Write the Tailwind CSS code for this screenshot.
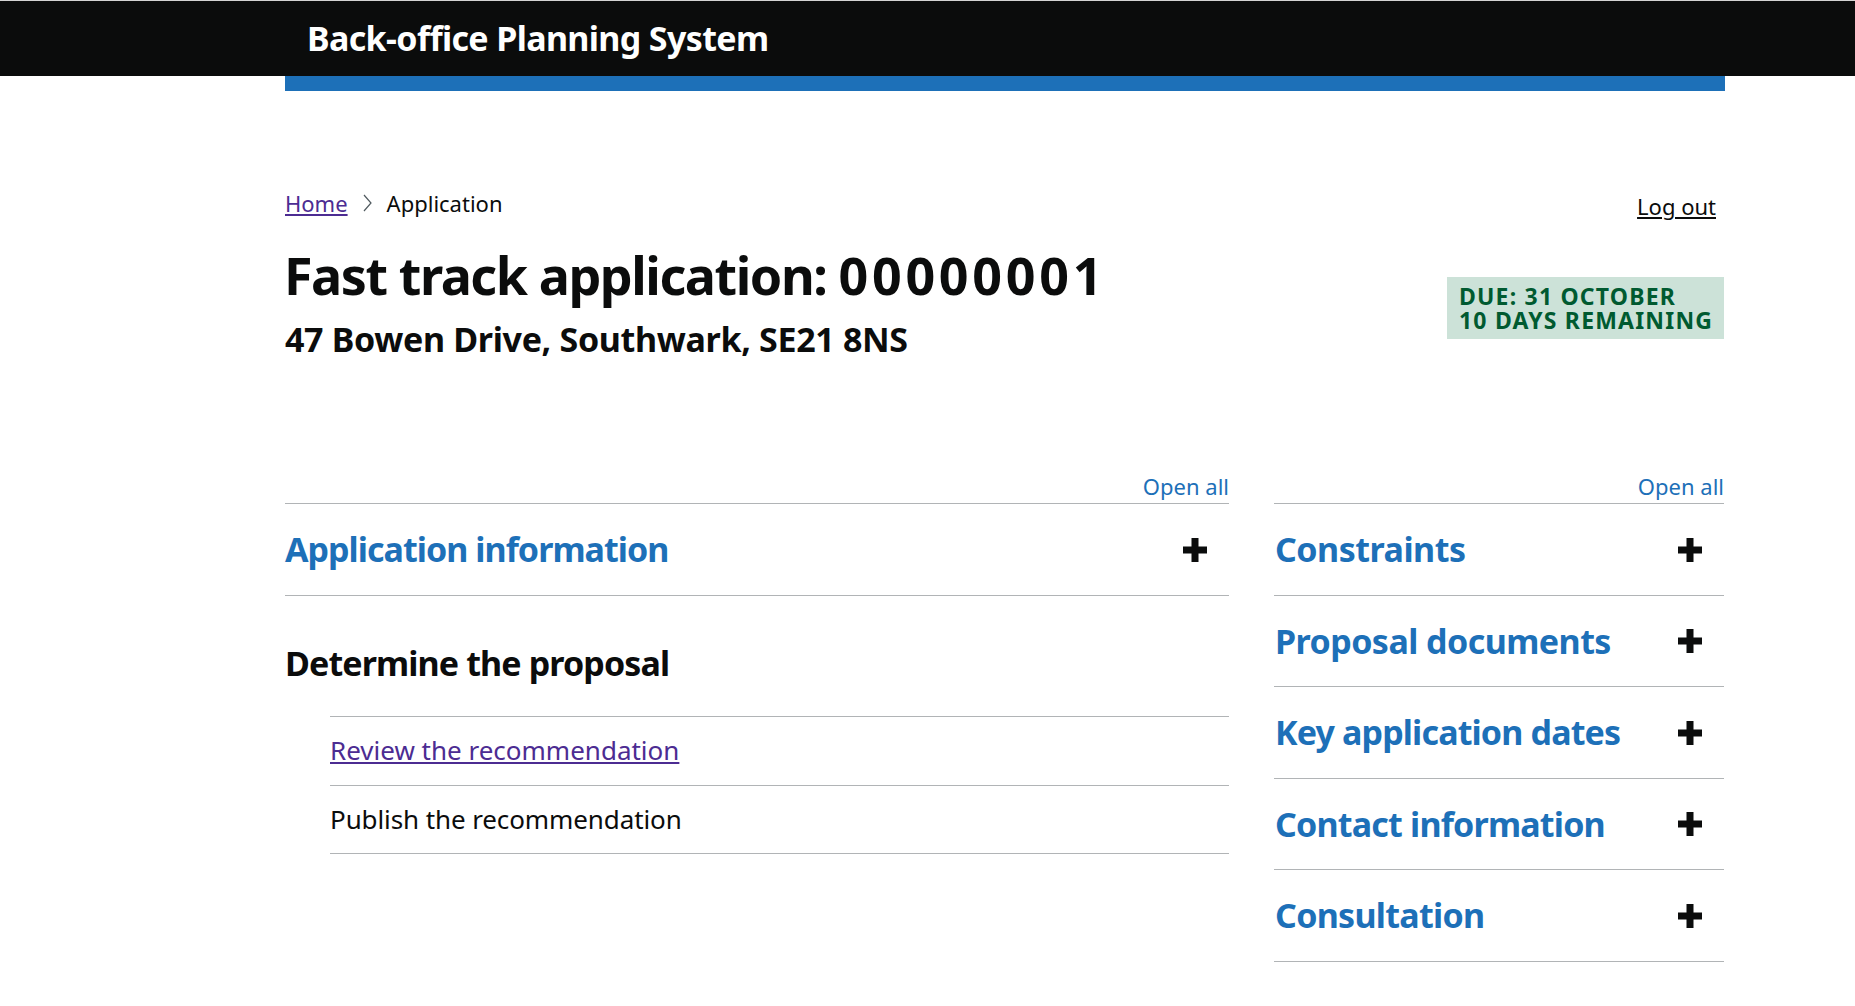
<!DOCTYPE html>
<html lang="en">
<head>
  <meta charset="UTF-8" />
  <title>Back-office Planning System</title>
  <script src="https://cdn.jsdelivr.net/npm/@tailwindcss/browser@4"></script>
</head>
<body class="bg-white text-[#0b0c0c] font-['Noto_Sans',sans-serif] border-t border-[#d4d4d4] overflow-hidden h-[1006px]">

  <!-- Header -->
  <header class="bg-[#0b0c0c] h-[75px] flex items-center pl-[307px] pb-[2px]">
    <a href="#" class="text-white text-[34px] font-bold tracking-[-0.64px] leading-none">Back-office Planning System</a>
  </header>

  <div class="ml-[285px] w-[1440px]">
    <div class="h-[15px] bg-[#1d70b8]"></div>

    <!-- Breadcrumb + log out -->
    <div class="flex justify-between items-start pt-[98px] pr-[9px]">
      <nav class="flex items-center text-[22px] leading-[28px]">
        <a href="#" class="text-[#4c2c92] underline">Home</a>
        <svg class="mx-[14px] w-[11px] h-[20px]" viewBox="0 0 11 20" fill="none" stroke="#505a5f" stroke-width="1.2"><path d="M2 2l7 8-7 8"/></svg>
        <span>Application</span>
      </nav>
      <a href="#" class="text-[22px] leading-[28px] underline mt-[3px]">Log out</a>
    </div>

    <!-- Title row -->
    <div class="flex justify-between items-start mt-[25px]">
      <div>
        <h1 class="text-[52px] leading-[60px] font-bold tracking-[-1.43px] whitespace-nowrap -ml-px">Fast track application: <span class="tracking-[3.7px]">00000001</span></h1>
        <p class="text-[34px] leading-[44px] font-bold tracking-[-0.33px] mt-[12px]">47 Bowen Drive, Southwark, SE21 8NS</p>
      </div>
      <div class="bg-[#cce2d8] text-[#005a30] font-bold uppercase text-[23px] leading-[24px] tracking-[1.2px] px-[12px] py-[7px] w-[277px] whitespace-nowrap mt-[32px] mr-px">
        Due: 31 October<br />10 days remaining
      </div>
    </div>

    <!-- Columns -->
    <div class="flex gap-[45px] mt-[112px] items-start">
      <main class="w-[944px]">
        <div class="text-right text-[22px] leading-[27px] text-[#1d70b8] border-b border-[#b1b4b6] h-[31px]">Open all</div>
        <div class="flex justify-between items-center h-[92px] border-b border-[#b1b4b6] pr-[22px]">
          <h2 class="text-[34px] font-bold text-[#1d70b8] tracking-[-0.96px]">Application information</h2>
          <svg class="w-6 h-6" viewBox="0 0 24 24" fill="#0b0c0c"><path d="M8.5 0h7v8.5H24v7h-8.5V24h-7v-8.5H0v-7h8.5z"/></svg>
        </div>
        <h2 class="text-[34px] font-bold tracking-[-0.88px] leading-[44px] mt-[45px]">Determine the proposal</h2>
        <ul class="ml-[45px] mt-[31px] border-t border-[#b1b4b6] text-[26px]">
          <li class="h-[69px] flex items-center border-b border-[#b1b4b6] pb-[2px]"><a href="#" class="text-[#4c2c92] underline">Review the recommendation</a></li>
          <li class="h-[68px] flex items-center border-b border-[#b1b4b6]"><span class="tracking-[-0.1px]">Publish the recommendation</span></li>
        </ul>
      </main>

      <aside class="w-[450px]">
        <div class="text-right text-[22px] leading-[27px] text-[#1d70b8] border-b border-[#b1b4b6] h-[31px]">Open all</div>
        <div class="flex justify-between items-center h-[92px] border-b border-[#b1b4b6] pl-px pr-[22px]">
          <h2 class="text-[34px] font-bold text-[#1d70b8] tracking-[-0.5px]">Constraints</h2>
          <svg class="w-6 h-6" viewBox="0 0 24 24" fill="#0b0c0c"><path d="M8.5 0h7v8.5H24v7h-8.5V24h-7v-8.5H0v-7h8.5z"/></svg>
        </div>
        <div class="flex justify-between items-center h-[91px] border-b border-[#b1b4b6] pl-px pr-[22px]">
          <h2 class="text-[34px] font-bold text-[#1d70b8] tracking-[-0.55px]">Proposal documents</h2>
          <svg class="w-6 h-6" viewBox="0 0 24 24" fill="#0b0c0c"><path d="M8.5 0h7v8.5H24v7h-8.5V24h-7v-8.5H0v-7h8.5z"/></svg>
        </div>
        <div class="flex justify-between items-center h-[92px] border-b border-[#b1b4b6] pl-px pr-[22px]">
          <h2 class="text-[34px] font-bold text-[#1d70b8] tracking-[-0.85px]">Key application dates</h2>
          <svg class="w-6 h-6" viewBox="0 0 24 24" fill="#0b0c0c"><path d="M8.5 0h7v8.5H24v7h-8.5V24h-7v-8.5H0v-7h8.5z"/></svg>
        </div>
        <div class="flex justify-between items-center h-[91px] border-b border-[#b1b4b6] pl-px pr-[22px]">
          <h2 class="text-[34px] font-bold text-[#1d70b8] tracking-[-0.8px]">Contact information</h2>
          <svg class="w-6 h-6" viewBox="0 0 24 24" fill="#0b0c0c"><path d="M8.5 0h7v8.5H24v7h-8.5V24h-7v-8.5H0v-7h8.5z"/></svg>
        </div>
        <div class="flex justify-between items-center h-[92px] border-b border-[#b1b4b6] pl-px pr-[22px]">
          <h2 class="text-[34px] font-bold text-[#1d70b8] tracking-[-0.7px]">Consultation</h2>
          <svg class="w-6 h-6" viewBox="0 0 24 24" fill="#0b0c0c"><path d="M8.5 0h7v8.5H24v7h-8.5V24h-7v-8.5H0v-7h8.5z"/></svg>
        </div>
      </aside>
    </div>
  </div>
</body>
</html>
